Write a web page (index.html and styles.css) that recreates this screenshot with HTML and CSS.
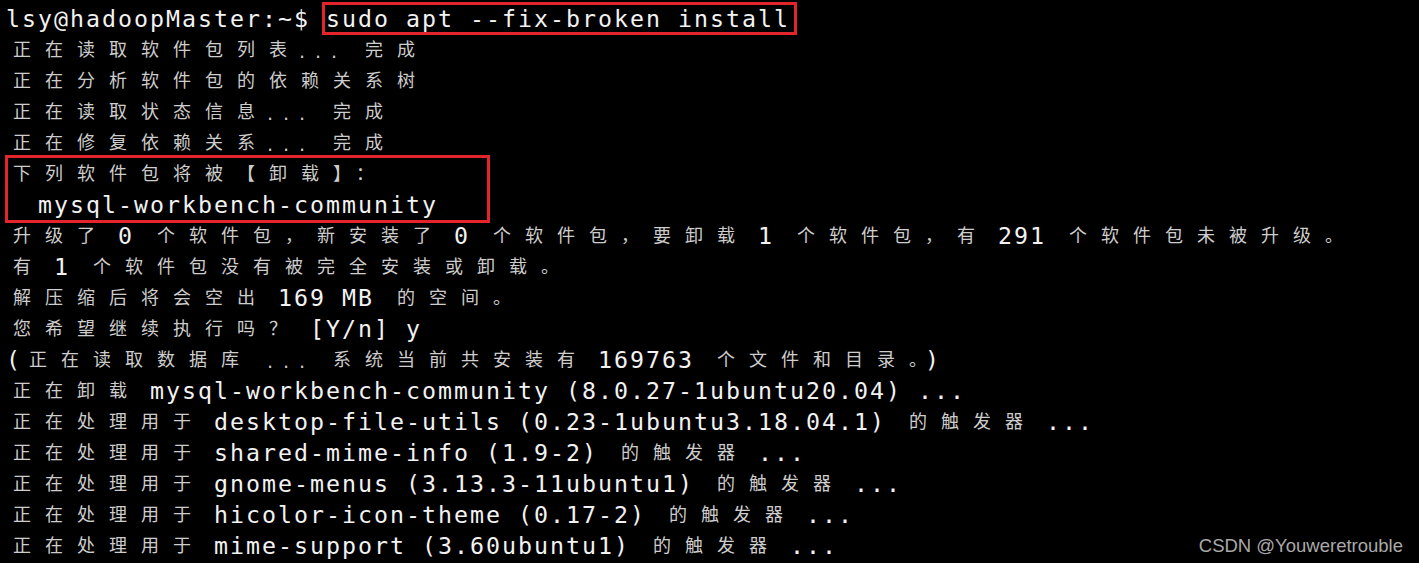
FILE: index.html
```html
<!DOCTYPE html>
<html lang="zh-CN">
<head>
<meta charset="utf-8">
<title>terminal</title>
<link rel="stylesheet" href="styles.css">
</head>
<body>
<div class="term">
<div class="row">lsy@hadoopMaster:~$ <span class="cmd">sudo apt --fix-broken install</span></div>
<div class="row"><span class="z">正在读取软件包列表</span><span class="d">...</span> <span class="z">完成</span></div>
<div class="row"><span class="z">正在分析软件包的依赖关系树</span></div>
<div class="row"><span class="z">正在读取状态信息</span><span class="d">...</span> <span class="z">完成</span></div>
<div class="row"><span class="z">正在修复依赖关系</span><span class="d">...</span> <span class="z">完成</span></div>
<div class="sel">
<div class="row"><span class="z">下列软件包将被【卸载】：</span></div>
<div class="row">  mysql-workbench-community</div>
</div>
<div class="row"><span class="z">升级了</span> 0 <span class="z">个软件包，新安装了</span> 0 <span class="z">个软件包，要卸载</span> 1 <span class="z">个软件包，有</span> 291 <span class="z">个软件包未被升级。</span></div>
<div class="row"><span class="z">有</span> 1 <span class="z">个软件包没有被完全安装或卸载。</span></div>
<div class="row"><span class="z">解压缩后将会空出</span> 169 MB <span class="z">的空间。</span></div>
<div class="row"><span class="z">您希望继续执行吗？</span> [Y/n] y</div>
<div class="row">(<span class="z">正在读取数据库</span> <span class="d">...</span> <span class="z">系统当前共安装有</span> 169763 <span class="z">个文件和目录。</span>)</div>
<div class="row"><span class="z">正在卸载</span> mysql-workbench-community (8.0.27-1ubuntu20.04) ...</div>
<div class="row"><span class="z">正在处理用于</span> desktop-file-utils (0.23-1ubuntu3.18.04.1) <span class="z">的触发器</span> ...</div>
<div class="row"><span class="z">正在处理用于</span> shared-mime-info (1.9-2) <span class="z">的触发器</span> ...</div>
<div class="row"><span class="z">正在处理用于</span> gnome-menus (3.13.3-11ubuntu1) <span class="z">的触发器</span> ...</div>
<div class="row"><span class="z">正在处理用于</span> hicolor-icon-theme (0.17-2) <span class="z">的触发器</span> ...</div>
<div class="row"><span class="z">正在处理用于</span> mime-support (3.60ubuntu1) <span class="z">的触发器</span> ...</div>
</div>
<div class="wm">CSDN @Youweretrouble</div>
</body>
</html>
```
FILE: styles.css
```css
html, body {
  margin: 0;
  background: #000;
}

body {
  overflow: hidden;
}

.term {
  padding: 2.5px 0 0 6px;
  font-family: "DejaVu Sans Mono", monospace;
  font-size: 23.25px;
  letter-spacing: 2px;
  color: #f2f2f2;
}

.row {
  height: 31px;
  line-height: 31px;
  white-space: pre;
}

.z {
  font-family: "Noto Sans CJK SC", sans-serif;
  font-size: 18px;
  line-height: 20px;
  letter-spacing: 14px;
  padding-left: 7px;
  margin-right: -7px;
  vertical-align: 1.5px;
  color: #cdcdcd;
}

.d {
  font-size: 16px;
  line-height: 20px;
  letter-spacing: 6.37px;
  padding-left: 3.2px;
  margin-right: -3.2px;
  color: #cdcdcd;
}

.cmd {
  position: relative;
}

.cmd::after {
  content: "";
  position: absolute;
  left: -4px;
  right: -7px;
  top: -3px;
  bottom: -3.5px;
  border: 3px solid #e3242b;
}

.sel {
  position: relative;
  width: 484px;
}

.sel::after {
  content: "";
  position: absolute;
  left: -1px;
  right: 0;
  top: -3px;
  bottom: -3px;
  border: 3px solid #e3242b;
}

.wm {
  position: absolute;
  right: 16px;
  top: 536px;
  font-family: "Liberation Sans", Arial, sans-serif;
  font-size: 18.5px;
  line-height: 20px;
  color: #a9a9a9;
}
```
